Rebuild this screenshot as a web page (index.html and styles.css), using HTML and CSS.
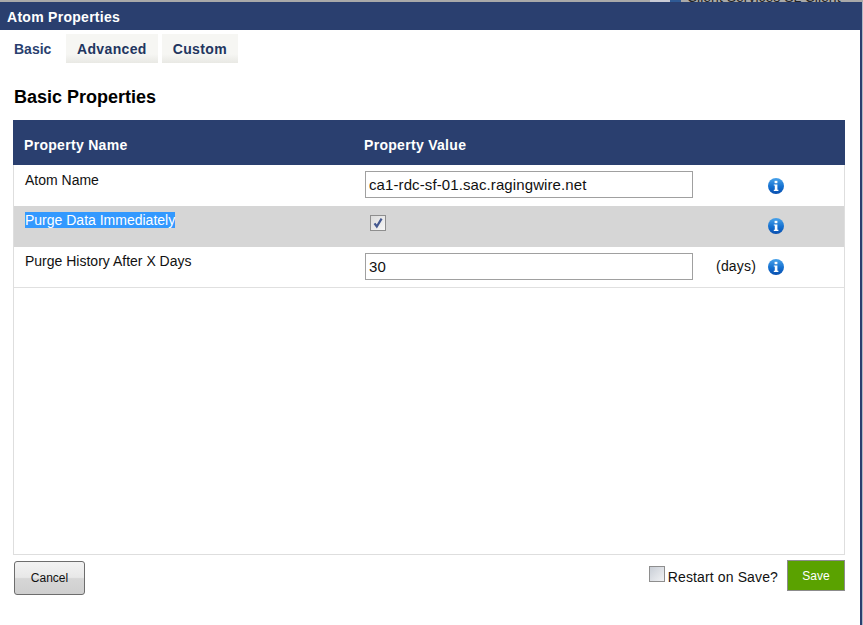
FILE: index.html
```html
<!DOCTYPE html>
<html lang="en">
<head>
<meta charset="utf-8">
<title>Atom Properties</title>
<link rel="stylesheet" href="styles.css">
</head>
<body>
<svg width="0" height="0" class="defs" aria-hidden="true">
  <defs>
    <linearGradient id="ig" x1="0" y1="0" x2="0" y2="1">
      <stop offset="0" stop-color="#4aa3ea"/>
      <stop offset="0.55" stop-color="#1470d0"/>
      <stop offset="1" stop-color="#0a4fae"/>
    </linearGradient>
    <symbol id="info" viewBox="0 0 16 16">
      <circle cx="8" cy="8" r="8" fill="url(#ig)"/>
      <rect x="6.6" y="2.8" width="2.8" height="2.4" fill="#fff"/>
      <path d="M5.8 6.4h3.6v5.4h1V13H5.8v-1.2h1V7.6h-1z" fill="#fff"/>
    </symbol>
  </defs>
</svg>
<div class="backdrop">
  <span class="backdrop-thumb"></span>
  <span class="backdrop-blue"></span>
  <span class="backdrop-text">Client Services SL Client</span>
</div>
<div class="dialog">
  <div class="titlebar">Atom Properties</div>
  <div class="content">
    <nav class="tabs">
      <span class="tab tab-active">Basic</span>
      <span class="tab">Advanced</span>
      <span class="tab">Custom</span>
    </nav>
    <h2 class="heading">Basic Properties</h2>
    <div class="panel">
      <div class="row row-head">
        <div class="name">Property Name</div>
        <div class="value">Property Value</div>
      </div>
      <div class="row">
        <div class="name">Atom Name</div>
        <div class="value"><input class="field" type="text" value="ca1-rdc-sf-01.sac.ragingwire.net"></div>
        <div class="unit"></div>
        <svg class="icon"><use href="#info"/></svg>
      </div>
      <div class="row row-shaded">
        <div class="name"><span class="selected">Purge Data Immediately</span></div>
        <div class="value"><span class="check checked"><svg viewBox="0 0 12 12" width="12" height="12"><path d="M2.5 6.3l2.3 3.2L9.6 1.6" fill="none" stroke="#44588f" stroke-width="2.2"/></svg></span></div>
        <div class="unit"></div>
        <svg class="icon"><use href="#info"/></svg>
      </div>
      <div class="row row-last">
        <div class="name">Purge History After X Days</div>
        <div class="value"><input class="field" type="text" value="30"></div>
        <div class="unit">(days)</div>
        <svg class="icon"><use href="#info"/></svg>
      </div>
    </div>
    <div class="footer">
      <button class="btn-cancel" type="button">Cancel</button>
      <div class="footer-right">
        <span class="check check-empty"></span>
        <span class="restart">Restart on Save?</span>
        <button class="btn-save" type="button">Save</button>
      </div>
    </div>
  </div>
</div>
</body>
</html>
```

FILE: styles.css
```css
html, body {
  margin: 0;
  padding: 0;
  height: 625px;
  overflow: hidden;
  background: #aeb7c6;
  font-family: "Liberation Sans", Arial, sans-serif;
  color: #111;
}
.defs { position: absolute; }
.backdrop {
  height: 2px;
  background: #a9a9a9;
  overflow: hidden;
  position: relative;
}
.backdrop-thumb {
  position: absolute;
  left: 650px;
  top: 0;
  width: 20px;
  height: 2px;
  background: #c9cbd6;
}
.backdrop-blue {
  position: absolute;
  left: 670px;
  top: 0;
  width: 11px;
  height: 2px;
  background: #2f5a94;
}
.backdrop-text {
  position: absolute;
  top: -10px;
  left: 687px;
  font-size: 14px;
  line-height: 14px;
  color: #222;
  white-space: nowrap;
}
.dialog {
  width: 860px;
  height: 623px;
  border-right: 2px solid #2a3f6f;
  background: #fff;
  display: flex;
  flex-direction: column;
}
.titlebar {
  height: 28px;
  margin-right: -2px;
  background: #2a3f6f;
  color: #fff;
  font-size: 14px;
  font-weight: 700;
  letter-spacing: 0.28px;
  line-height: 30px;
  padding-left: 7px;
}
.content {
  flex: 1;
  padding: 4px 15px 0 13px;
  display: flex;
  flex-direction: column;
}
.tabs {
  display: flex;
  gap: 4px;
  height: 29px;
}
.tab {
  background: linear-gradient(#f6f6f3 70%, #e9e9e4);
  color: #22355f;
  font-size: 14px;
  font-weight: 700;
  letter-spacing: 0.35px;
  line-height: 30px;
  padding: 0 11px;
}
.tab-active {
  background: none;
  color: #2a3f6f;
  width: 49px;
  box-sizing: border-box;
  padding: 0 0 0 1px;
  letter-spacing: 0;
}
.heading {
  margin: 24px 0 0 1px;
  font-size: 18px;
  line-height: 20px;
  font-weight: 700;
  color: #000;
  height: 33px;
}
.panel {
  height: 435px;
  box-sizing: border-box;
  border: 1px solid #dedede;
  border-top: 0;
}
.row {
  display: grid;
  grid-template-columns: 351px 328px 75px 16px;
  height: 41px;
  box-sizing: border-box;
  font-size: 14px;
}
.row-head {
  margin: 0 -1px;
  height: 45px;
  background: #2a3f6f;
  color: #fff;
  font-weight: 700;
  letter-spacing: 0.3px;
}
.name {
  padding: 7px 0 0 11px;
  line-height: 16px;
}
.row-head .name, .row-head .value { padding-top: 0; line-height: 50px; }
.value { padding-top: 6px; }
.row-shaded { background: #d6d6d6; }
.row-shaded .name, .row-last .name { padding-top: 6px; }
.row-last { border-bottom: 1px solid #e0e0e0; }
.selected {
  background: #3399ff;
  color: #fff;
}
.field {
  display: block;
  box-sizing: border-box;
  width: 328px;
  height: 27px;
  border: 1px solid #a0a0a0;
  padding: 2px 3px;
  margin: 0;
  font: 15px "Liberation Sans", Arial, sans-serif;
  letter-spacing: 0.1px;
  color: #111;
  background: #fff;
  outline: 0;
  border-radius: 0;
}
.unit {
  padding: 11px 12px 0 0;
  text-align: right;
  line-height: 16px;
  letter-spacing: 0.17px;
}
.icon {
  width: 16px;
  height: 16px;
  margin-top: 13px;
}
.row-shaded .icon { margin-top: 12px; }
.row-last .icon { margin-top: 12px; }
.check {
  display: flex;
  align-items: center;
  justify-content: center;
  box-sizing: border-box;
  width: 16px;
  height: 16px;
  border: 1px solid #8e8e8e;
  background: linear-gradient(135deg, #dcdcdc, #f6f6f6);
}
.checked { margin: 3px 0 0 5px; }
.footer {
  display: flex;
  justify-content: space-between;
  align-items: flex-start;
  margin-top: 5px;
}
.btn-cancel {
  width: 71px;
  height: 34px;
  margin: 1px 0 0 1px;
  box-sizing: border-box;
  border: 1px solid #6d6d6d;
  border-radius: 3px;
  background: linear-gradient(#f2f2f2 0%, #e8e8e8 48%, #d6d6d6 52%, #cfcfcf 100%);
  font: 12px "Liberation Sans", Arial, sans-serif;
  color: #111;
  padding: 0;
}
.footer-right {
  display: flex;
  align-items: flex-start;
}
.check-empty {
  margin: 6px 3px 0 0;
  background: linear-gradient(135deg, #c9ced6, #f1f2f4);
}
.restart {
  font-size: 14px;
  line-height: 16px;
  margin: 9px 9px 0 0;
  letter-spacing: 0.13px;
}
.btn-save {
  width: 58px;
  height: 31px;
  box-sizing: border-box;
  border: 1px solid #8c8c8c;
  background: #5aa200;
  color: #fff;
  font: 12px "Liberation Sans", Arial, sans-serif;
  padding: 0;
}
```
